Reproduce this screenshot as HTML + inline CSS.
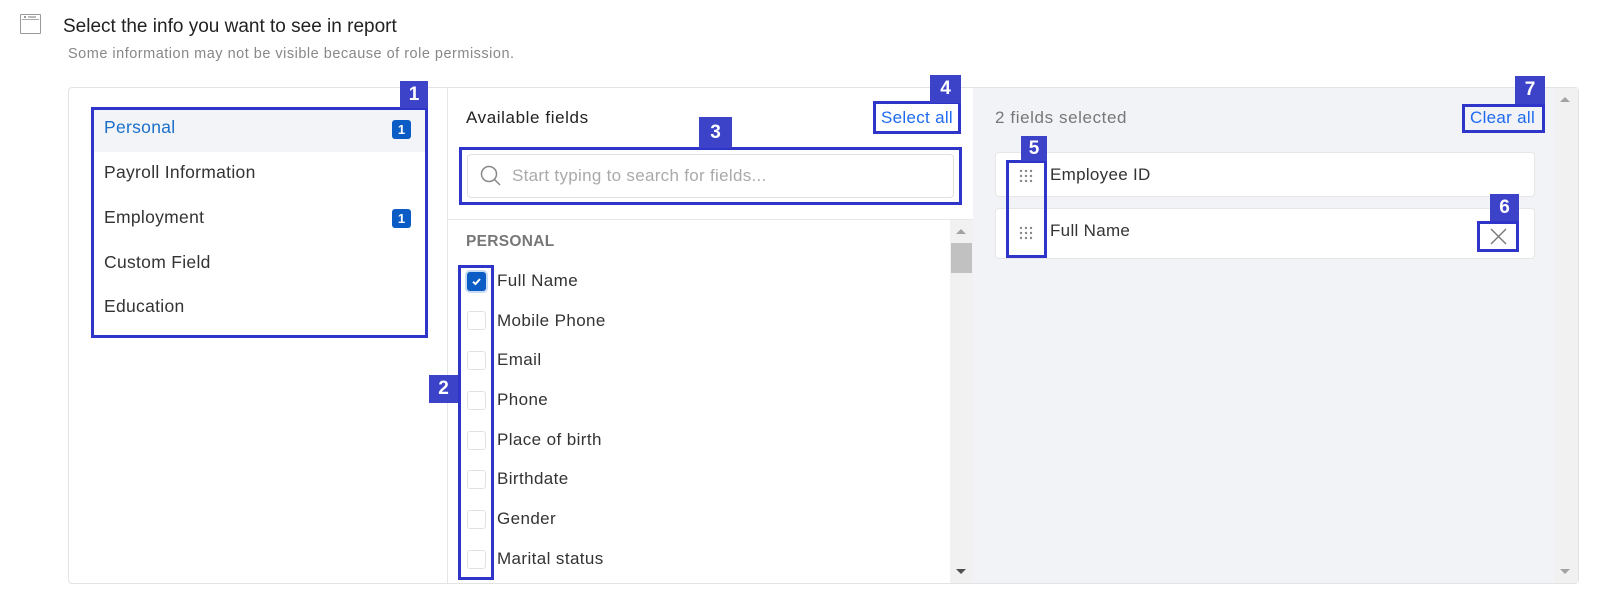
<!DOCTYPE html>
<html><head><meta charset="utf-8"><style>
*{box-sizing:border-box;margin:0;padding:0}
body{width:1600px;height:607px;background:#fff;font-family:"Liberation Sans",Arial,sans-serif;position:relative;overflow:hidden;color:#222}
.a{position:absolute}
.t{position:absolute;white-space:nowrap;line-height:1}
.ann{position:absolute;border:3px solid #2f35c9}
.lab{position:absolute;background:#3d43c8;color:#fff;font-weight:bold;font-size:19px;display:flex;align-items:center;justify-content:center}
.cb{position:absolute;left:467px;width:19px;height:19px;border:1px solid #e2e2e2;border-radius:3px;background:#fff}
.it{position:absolute;left:497px;font-size:17px;letter-spacing:.4px;color:#333;line-height:1;white-space:nowrap}
.li{position:absolute;left:104px;font-size:17.5px;letter-spacing:.3px;color:#333;line-height:1;white-space:nowrap}
.dots{position:absolute;width:14px;height:14px}
</style></head><body>
<!-- header icon -->
<div class="a" style="left:20px;top:14px;width:21px;height:20px;border:1.5px solid #999;border-radius:1px"></div>
<div class="a" style="left:22px;top:19px;width:17px;height:1px;background:#aaa"></div>
<div class="a" style="left:24px;top:16px;width:2px;height:2px;background:#999"></div>
<div class="a" style="left:28px;top:16px;width:8px;height:2px;background:#bbb"></div>
<div class="t" style="left:63px;top:17px;font-size:19px;color:#222">Select the info you want to see in report</div>
<div class="t" style="left:68px;top:47px;font-size:14.5px;letter-spacing:.5px;color:#888">Some information may not be visible because of role permission.</div>

<!-- card -->
<div class="a" style="left:68px;top:87px;width:1511px;height:497px;border:1px solid #e3e3e3;border-radius:4px"></div>
<div class="a" style="left:447px;top:88px;width:1px;height:495px;background:#e6e6e6"></div>
<div class="a" style="left:973px;top:88px;width:605px;height:495px;background:#f2f3f7"></div>
<div class="a" style="left:448px;top:219px;width:525px;height:1px;background:#e6e6e6"></div>
<!-- middle scrollbar -->
<div class="a" style="left:950px;top:220px;width:23px;height:363px;background:#f1f1f1"></div>
<div class="a" style="left:951px;top:243px;width:21px;height:30px;background:#c1c1c1"></div>
<div class="a" style="left:956px;top:229px;width:0;height:0;border-left:5px solid transparent;border-right:5px solid transparent;border-bottom:5px solid #a3a3a3"></div>
<div class="a" style="left:956px;top:569px;width:0;height:0;border-left:5px solid transparent;border-right:5px solid transparent;border-top:5px solid #505050"></div>
<!-- right scrollbar -->
<div class="a" style="left:1554px;top:88px;width:24px;height:495px;background:#f1f1f1"></div>
<div class="a" style="left:1560px;top:97px;width:0;height:0;border-left:5px solid transparent;border-right:5px solid transparent;border-bottom:5px solid #a3a3a3"></div>
<div class="a" style="left:1560px;top:569px;width:0;height:0;border-left:5px solid transparent;border-right:5px solid transparent;border-top:5px solid #a3a3a3"></div>

<!-- left list -->
<div class="a" style="left:94px;top:110px;width:331px;height:42px;background:#f3f4f8"></div>
<div class="li" style="top:119px;color:#1a6fca">Personal</div>
<div class="li" style="top:164px">Payroll Information</div>
<div class="li" style="top:209px">Employment</div>
<div class="li" style="top:254px">Custom Field</div>
<div class="li" style="top:298px">Education</div>
<div class="a" style="left:392px;top:120px;width:19px;height:19px;background:#0b5cc4;border-radius:3px;color:#fff;font-size:13px;font-weight:bold;display:flex;align-items:center;justify-content:center">1</div>
<div class="a" style="left:392px;top:209px;width:19px;height:19px;background:#0b5cc4;border-radius:3px;color:#fff;font-size:13px;font-weight:bold;display:flex;align-items:center;justify-content:center">1</div>
<div class="ann" style="left:91px;top:107px;width:337px;height:231px"></div>
<div class="lab" style="left:400px;top:81px;width:28px;height:27px">1</div>

<!-- middle -->
<div class="t" style="left:466px;top:109px;font-size:17px;letter-spacing:.6px;color:#222">Available fields</div>
<div class="t" style="left:881px;top:109px;font-size:17px;letter-spacing:.3px;color:#1e6bf0">Select all</div>
<div class="ann" style="left:873px;top:101px;width:88px;height:33px"></div>
<div class="lab" style="left:930px;top:75px;width:31px;height:28px">4</div>
<div class="a" style="left:467px;top:154px;width:487px;height:44px;border:1px solid #e0e0e0;border-radius:4px"></div>
<svg class="a" style="left:479px;top:164px" width="24" height="24" viewBox="0 0 24 24"><circle cx="10" cy="10" r="7.5" fill="none" stroke="#888" stroke-width="1.5"/><line x1="15.5" y1="15.5" x2="21" y2="21" stroke="#888" stroke-width="1.5"/></svg>
<div class="t" style="left:512px;top:167px;font-size:17px;letter-spacing:.3px;color:#aaa">Start typing to search for fields...</div>
<div class="ann" style="left:459px;top:147px;width:503px;height:58px"></div>
<div class="lab" style="left:699px;top:117px;width:33px;height:31px">3</div>
<div class="t" style="left:466px;top:234px;font-size:15.5px;color:#777;font-weight:bold;letter-spacing:.3px">PERSONAL</div>

<div class="cb" style="top:272px;background:#0b5cc4;border-color:#0b5cc4;box-shadow:0 0 0 2px #c9dcf5"></div>
<svg class="a" style="left:470px;top:275px" width="13" height="13" viewBox="0 0 13 13"><path d="M3 6.8 L5.5 9 L10 4" fill="none" stroke="#fff" stroke-width="2"/></svg>
<div class="it" style="top:272px">Full Name</div>
<div class="cb" style="top:311px"></div><div class="it" style="top:312px">Mobile Phone</div>
<div class="cb" style="top:351px"></div><div class="it" style="top:351px">Email</div>
<div class="cb" style="top:391px"></div><div class="it" style="top:391px">Phone</div>
<div class="cb" style="top:431px"></div><div class="it" style="top:431px">Place of birth</div>
<div class="cb" style="top:470px"></div><div class="it" style="top:470px">Birthdate</div>
<div class="cb" style="top:510px"></div><div class="it" style="top:510px">Gender</div>
<div class="cb" style="top:550px"></div><div class="it" style="top:550px">Marital status</div>
<div class="ann" style="left:458px;top:265px;width:36px;height:315px"></div>
<div class="lab" style="left:429px;top:375px;width:29px;height:28px">2</div>

<!-- right -->
<div class="t" style="left:995px;top:109px;font-size:17px;letter-spacing:.6px;color:#777">2 fields selected</div>
<div class="t" style="left:1470px;top:109px;font-size:17px;letter-spacing:.3px;color:#1e6bf0">Clear all</div>
<div class="ann" style="left:1462px;top:104px;width:83px;height:29px"></div>
<div class="lab" style="left:1515px;top:76px;width:30px;height:28px">7</div>
<div class="a" style="left:995px;top:152px;width:540px;height:45px;background:#fff;border:1px solid #e6e6e6;border-radius:4px"></div>
<div class="a" style="left:995px;top:208px;width:540px;height:51px;background:#fff;border:1px solid #e6e6e6;border-radius:4px"></div>
<svg class="dots" style="left:1019px;top:169px" viewBox="0 0 14 14" fill="#888"><circle cx="2" cy="2" r="1.2"/><circle cx="7" cy="2" r="1.2"/><circle cx="12" cy="2" r="1.2"/><circle cx="2" cy="7" r="1.2"/><circle cx="7" cy="7" r="1.2"/><circle cx="12" cy="7" r="1.2"/><circle cx="2" cy="12" r="1.2"/><circle cx="7" cy="12" r="1.2"/><circle cx="12" cy="12" r="1.2"/></svg>
<svg class="dots" style="left:1019px;top:226px" viewBox="0 0 14 14" fill="#888"><circle cx="2" cy="2" r="1.2"/><circle cx="7" cy="2" r="1.2"/><circle cx="12" cy="2" r="1.2"/><circle cx="2" cy="7" r="1.2"/><circle cx="7" cy="7" r="1.2"/><circle cx="12" cy="7" r="1.2"/><circle cx="2" cy="12" r="1.2"/><circle cx="7" cy="12" r="1.2"/><circle cx="12" cy="12" r="1.2"/></svg>
<div class="t" style="left:1050px;top:166px;font-size:17px;letter-spacing:.3px;color:#333">Employee ID</div>
<div class="t" style="left:1050px;top:222px;font-size:17px;letter-spacing:.3px;color:#333">Full Name</div>
<div class="ann" style="left:1006px;top:160px;width:41px;height:98px"></div>
<div class="lab" style="left:1021px;top:136px;width:26px;height:25px">5</div>
<div class="a" style="left:1477px;top:221px;width:42px;height:31px;background:#fff"></div>
<svg class="a" style="left:1489px;top:227px" width="19" height="19" viewBox="0 0 19 19"><path d="M2 2 L17 17 M17 2 L2 17" stroke="#777" stroke-width="1.4"/></svg>
<div class="ann" style="left:1477px;top:221px;width:42px;height:31px"></div>
<div class="lab" style="left:1490px;top:194px;width:29px;height:27px">6</div>
</body></html>
